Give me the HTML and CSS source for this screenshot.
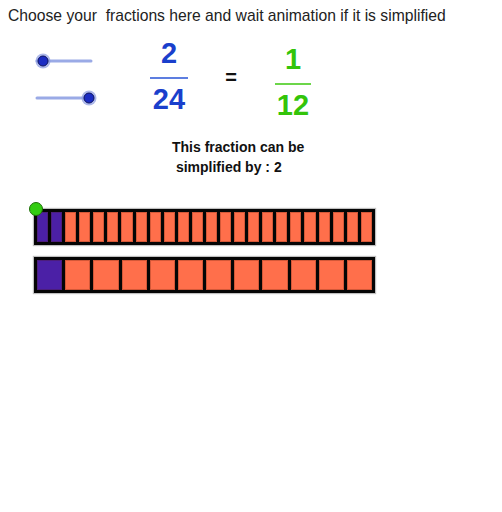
FILE: index.html
```html
<!DOCTYPE html>
<html>
<head>
<meta charset="utf-8">
<link rel="stylesheet" href="styles.css">
</head>
<body>
<div class="title">Choose your  fractions here and wait animation if it is simplified</div>
<div class="row">
  <svg class="sliders" width="70" height="70" viewBox="0 0 70 70">
    <line x1="7" y1="22" x2="61" y2="22" stroke="#9aaae6" stroke-width="3" stroke-linecap="round"/>
    <circle cx="13" cy="22" r="7.5" fill="#8a9ae0" opacity="0.7"/>
    <circle cx="13" cy="22" r="5" fill="#1b2cc2" stroke="#0c1260" stroke-width="1"/>
    <line x1="7" y1="59" x2="61" y2="59" stroke="#9aaae6" stroke-width="3" stroke-linecap="round"/>
    <circle cx="59" cy="59" r="7.5" fill="#8a9ae0" opacity="0.7"/>
    <circle cx="59" cy="59" r="5" fill="#1b2cc2" stroke="#0c1260" stroke-width="1"/>
  </svg>
  <div class="frac frac-a">
    <div class="num">2</div>
    <div class="bar-line"></div>
    <div class="den">24</div>
  </div>
  <div class="equals">=</div>
  <div class="frac frac-b">
    <div class="num">1</div>
    <div class="bar-line"></div>
    <div class="den">12</div>
  </div>
</div>
<div class="message">This fraction can be
 simplified by : 2</div>
<div class="bars">
  <div class="strip strip-24">
    <div class="cell purple"></div><div class="cell purple"></div>
    <div class="cell"></div><div class="cell"></div><div class="cell"></div><div class="cell"></div><div class="cell"></div><div class="cell"></div><div class="cell"></div><div class="cell"></div><div class="cell"></div><div class="cell"></div><div class="cell"></div>
    <div class="cell"></div><div class="cell"></div><div class="cell"></div><div class="cell"></div><div class="cell"></div><div class="cell"></div><div class="cell"></div><div class="cell"></div><div class="cell"></div><div class="cell"></div><div class="cell"></div>
  </div>
  <div class="strip strip-12">
    <div class="cell purple"></div>
    <div class="cell"></div><div class="cell"></div><div class="cell"></div><div class="cell"></div><div class="cell"></div><div class="cell"></div><div class="cell"></div><div class="cell"></div><div class="cell"></div><div class="cell"></div><div class="cell"></div>
  </div>
  <div class="dot"></div>
</div>
</body>
</html>
```
FILE: styles.css
```css
html, body {
  margin: 0;
  padding: 0;
  background: #ffffff;
}
body {
  width: 502px;
  height: 512px;
  font-family: "Liberation Sans", Arial, sans-serif;
  color: #1a1a1a;
}
.title {
  padding: 7px 0 0 8px;
  font-size: 15.7px;
  line-height: 18px;
  white-space: pre;
  color: #222222;
}
.row {
  display: flex;
  align-items: flex-start;
  margin-top: 14px;
  padding-left: 30px;
}
.sliders {
  display: block;
  flex: none;
}
.frac {
  width: 40px;
  display: flex;
  flex-direction: column;
  align-items: center;
  font-weight: bold;
  font-size: 29px;
  line-height: 28px;
}
.frac .num, .frac .den {
  height: 28px;
}
.frac .bar-line {
  height: 2px;
  margin-top: 10px;
  margin-bottom: 6px;
}
.frac-a {
  margin-left: 49px;
  color: #1a3fcc;
}
.frac-a .bar-line {
  width: 38px;
  background: #5d7ee0;
}
.frac-b {
  margin-left: 32px;
  margin-top: 6px;
  color: #33c40a;
}
.frac-b .bar-line {
  width: 36px;
  background: #6cd64a;
}
.equals {
  width: 20px;
  margin-left: 32px;
  margin-top: 28px;
  text-align: center;
  font-weight: bold;
  font-size: 20px;
  line-height: 20px;
  color: #111111;
}
.message {
  margin-top: 18px;
  padding-left: 172px;
  font-size: 14px;
  font-weight: bold;
  line-height: 20px;
  white-space: pre;
  color: #111111;
}
.bars {
  position: relative;
  margin-top: 32px;
  margin-left: 34px;
  width: 341px;
  display: flex;
  flex-direction: column;
  gap: 12px;
}
.strip {
  display: flex;
  height: 36px;
  box-sizing: border-box;
  padding: 3px;
  gap: 3px;
  background: #050505;
  box-shadow: 0 0 1px 1px rgba(0, 0, 0, 0.25);
}
.cell {
  flex: 1;
  background: #ff6f4b;
  box-shadow: inset 0 0 0 1px rgba(80, 20, 0, 0.25);
}
.cell.purple {
  background: #4b20a6;
}
.dot {
  position: absolute;
  left: -5px;
  top: -7px;
  width: 12px;
  height: 12px;
  border-radius: 50%;
  background: #33cc11;
  border: 1px solid #1e6e08;
}
```
